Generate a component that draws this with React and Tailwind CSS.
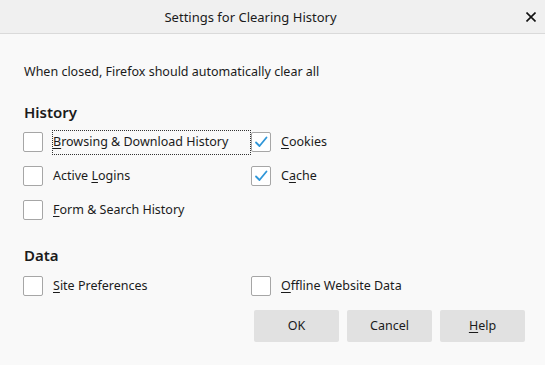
import React from "react";

function Box({ checked }) {
  return (
    <div className="w-5 h-5 shrink-0 bg-white border border-[#a6a6a6] rounded-[2px] flex items-center justify-center">
      {checked && (
        <svg width="14" height="14" viewBox="0 0 14 14" fill="none">
          <path d="M2 7.5 L5.5 11 L12.5 2.5" stroke="#2f96d8" strokeWidth="1.8" strokeLinecap="round" strokeLinejoin="round" />
        </svg>
      )}
    </div>
  );
}

function Item({ checked, focused, children }) {
  return (
    <div className="h-5 flex items-center">
      <Box checked={checked} />
      <div
        className={
          "ml-[9px] h-[25px] flex items-center pl-0 flex-1 border " +
          (focused ? "border-dotted border-[#333]" : "border-transparent")
        }
      >
        <span>{children}</span>
      </div>
    </div>
  );
}

const U = ({ children }) => <span className="underline underline-offset-2 decoration-1">{children}</span>;

export default function App() {
  return (
    <div
      className="w-[545px] h-[365px] bg-[#f9f9f9] text-[#1b1b1b] flex flex-col"
      style={{ fontFamily: '"Noto Sans", sans-serif' }}
    >
      <div className="h-[34px] shrink-0 bg-[#f0f0f0] border-b border-[#dadada] flex items-center">
        <div className="flex-1 flex justify-center pl-[2px] pt-px text-[13px] leading-none">Settings for Clearing History</div>
        <div className="w-[46px] flex justify-end pr-[9px]">
          <svg width="10" height="10" viewBox="0 0 10 10">
            <path d="M0.5 0.5 L9.5 9.5 M9.5 0.5 L0.5 9.5" stroke="#111" strokeWidth="1.6" />
          </svg>
        </div>
      </div>
      <div className="pl-[23px] pr-[20px] pt-[30px] text-[12.5px]">
        <div className="leading-4 pl-px">When closed, Firefox should automatically clear all</div>
        <div className="mt-[22px] text-[15px] font-semibold leading-5 pl-px">History</div>
        <div className="mt-[10px] grid grid-cols-[228px_1fr] gap-y-[14px]">
          <Item focused><U>B</U>rowsing &amp; Download History</Item>
          <Item checked><U>C</U>ookies</Item>
          <Item>Active <U>L</U>ogins</Item>
          <Item checked>C<U>a</U>che</Item>
          <Item><U>F</U>orm &amp; Search History</Item>
          <div />
        </div>
        <div className="mt-[25px] text-[15px] font-semibold leading-5 pl-px">Data</div>
        <div className="mt-[11px] grid grid-cols-[228px_1fr]">
          <Item><U>S</U>ite Preferences</Item>
          <Item><U>O</U>ffline Website Data</Item>
        </div>
        <div className="mt-[14px] flex justify-end gap-2">
          <button className="w-[85px] h-8 bg-[#e1e1e1] rounded-[2px]">OK</button>
          <button className="w-[85px] h-8 bg-[#e1e1e1] rounded-[2px]">Cancel</button>
          <button className="w-[85px] h-8 bg-[#e1e1e1] rounded-[2px]"><U>H</U>elp</button>
        </div>
      </div>
    </div>
  );
}
